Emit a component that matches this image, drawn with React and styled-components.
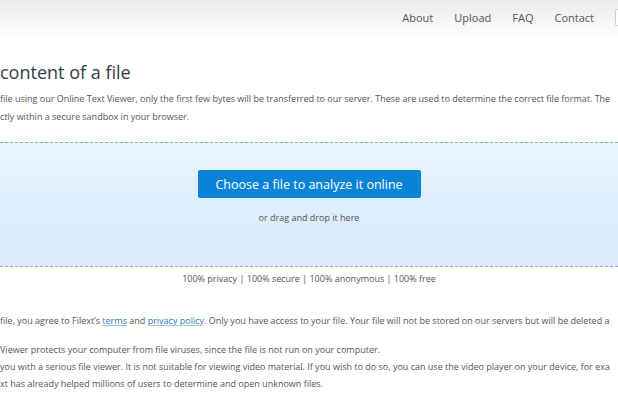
import React from "react";
import styled, { createGlobalStyle } from "styled-components";

const Global = createGlobalStyle`
  html, body { margin: 0; padding: 0; background: #fff; }
  body { width: 618px; height: 394px; overflow: hidden; font-family: "Open Sans", "Noto Sans", sans-serif; }
  * { box-sizing: border-box; }
`;

const Header = styled.header`
  height: 40px;
  background: linear-gradient(#eaeaea, #fbfbfb 80%, #fff);
  display: flex;
  justify-content: flex-end;
  align-items: center;
  overflow: hidden;
`;

const Nav = styled.nav`
  display: flex;
  align-items: center;
  gap: 21px;
  margin-right: -48px;
  padding-bottom: 6px;
`;

const NavLink = styled.a`
  font-size: 11px;
  color: #555;
  text-decoration: none;
`;

const SearchBox = styled.div`
  width: 51px;
  height: 17px;
  border: 1px solid #cfcfcf;
  border-radius: 2px;
  background: #fff;
`;

const Title = styled.h1`
  margin: 19px 0 0 0;
  font-size: 18px;
  font-weight: 400;
  color: #343d47;
  line-height: 26px;
`;

const Lead = styled.p`
  margin: 5px 0 0 0;
  font-size: 9px;
  line-height: 18px;
  color: #555;
  white-space: nowrap;
`;

const Drop = styled.section`
  margin-top: 16px;
  height: 125px;
  border-top: 1px dashed #9aa6b2;
  border-bottom: 1px dashed #9aa6b2;
  background: linear-gradient(#e8f6fe, #dfeefc 45%, #dbeafa);
  display: flex;
  flex-direction: column;
  align-items: center;
  padding-top: 27px;
`;

const ChooseButton = styled.button`
  width: 223px;
  height: 28px;
  border: none;
  border-radius: 2px;
  background: #0b84d8;
  color: #fff;
  font-family: inherit;
  font-size: 12.5px;
  cursor: pointer;
  padding: 0;
`;

const Hint = styled.div`
  margin-top: 13px;
  font-size: 9px;
  color: #555;
`;

const Badges = styled.div`
  text-align: center;
  font-size: 9px;
  color: #555;
  margin-top: 5px;
`;

const Body = styled.div`
  margin-top: 27px;
  color: #555;
  font-size: 9px;
  white-space: nowrap;
`;

const Para = styled.p`
  margin: 0 0 ${(p) => p.$gap || 0}px 0;
  line-height: 17px;
`;

const Link = styled.a`
  color: #2b7bbf;
  text-decoration: underline;
  text-decoration-color: #9cc6e8;
`;

export default function App() {
  return (
    <>
      <Global />
      <Header>
        <Nav>
          <NavLink>About</NavLink>
          <NavLink>Upload</NavLink>
          <NavLink>FAQ</NavLink>
          <NavLink>Contact</NavLink>
          <SearchBox />
        </Nav>
      </Header>
      <Title>content of a file</Title>
      <Lead>
        file using our Online Text Viewer, only the first few bytes will be transferred to our server. These are used to determine the correct file format. The
        <br />
        ctly within a secure sandbox in your browser.
      </Lead>
      <Drop>
        <ChooseButton>Choose a file to analyze it online</ChooseButton>
        <Hint>or drag and drop it here</Hint>
      </Drop>
      <Badges>100% privacy | 100% secure | 100% anonymous | 100% free</Badges>
      <Body>
        <Para $gap={12}>
          file, you agree to Filext’s <Link>terms</Link> and <Link>privacy policy</Link>. Only you have access to your file. Your file will not be stored on our servers but will be deleted a
        </Para>
        <Para>Viewer protects your computer from file viruses, since the file is not run on your computer.</Para>
        <Para>you with a serious file viewer. It is not suitable for viewing video material. If you wish to do so, you can use the video player on your device, for exa</Para>
        <Para>xt has already helped millions of users to determine and open unknown files.</Para>
      </Body>
    </>
  );
}
